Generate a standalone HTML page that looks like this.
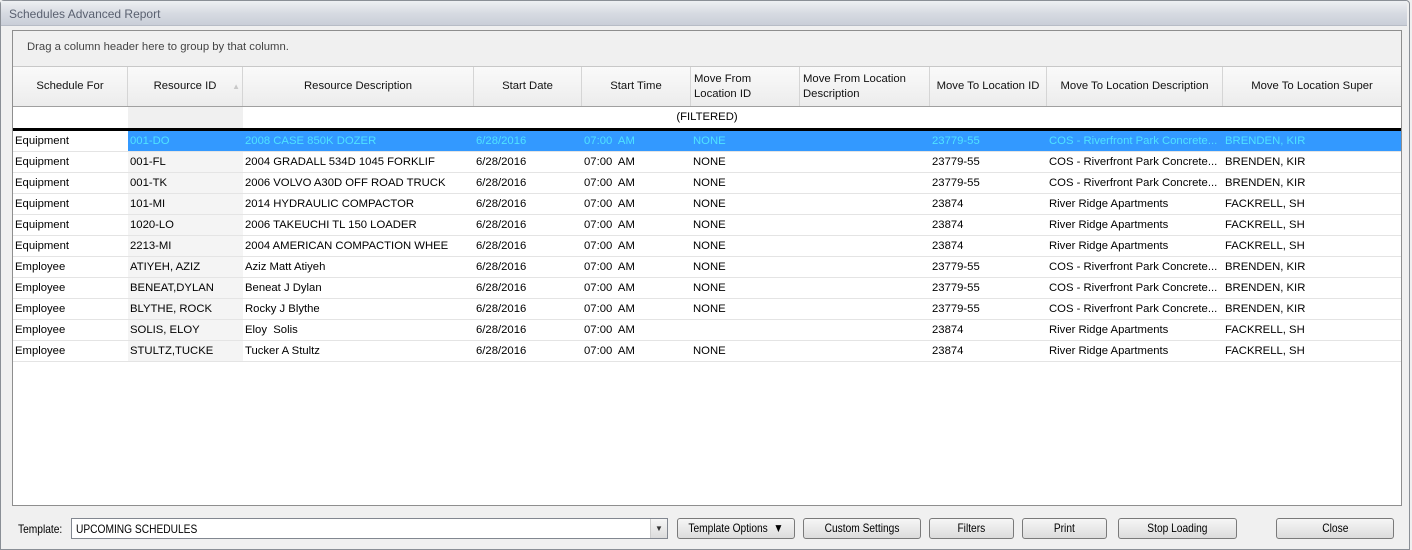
<!DOCTYPE html>
<html><head><meta charset="utf-8"><style>
*{box-sizing:border-box;margin:0;padding:0}
body{width:1412px;height:550px;background:#f0f0f0;font-family:"Liberation Sans",sans-serif;font-size:11.3px;color:#000;position:relative;overflow:hidden}
.abs{position:absolute}
#win{left:0;top:0;width:1410px;height:550px;border:1px solid #8a8f96;border-radius:4px 4px 0 0;background:#f0f0f0}
#title{left:1px;top:1px;width:1406px;height:25px;background:linear-gradient(#eef0f3,#d7dbe2 50%,#c9ced8);border-bottom:1px solid #b7bcc6;color:#5a6170;font-size:12px;padding:6px 0 0 8px}
#grid{left:12px;top:30px;width:1390px;height:476px;border:1px solid #8e8e8e;background:#fff}
#group{left:0;top:0;width:1388px;height:36px;background:#f0f0f0;color:#444;padding:10px 0 0 14px;border-bottom:1px solid #c8c8c8}
#hdr{left:0;top:36px;width:1388px;height:40px;background:linear-gradient(#fafafa,#ececec);border-bottom:1px solid #a0a0a0}
.h{position:absolute;top:0;height:39px;border-right:1px solid #d5d5d5;display:flex;align-items:center;justify-content:center;text-align:center;color:#111;line-height:15px}
.h.l{justify-content:flex-start;text-align:left;padding-left:3px}
#filt{left:0;top:76px;width:1388px;height:24px;border-bottom:3px solid #000}
.row{position:absolute;left:0;width:1388px;height:21px;border-bottom:1px solid #e4e4e4}
.c{position:absolute;top:0;height:20px;line-height:20px;padding-left:2px;white-space:nowrap;overflow:hidden}
.sel{background:#3399ff;color:#4fe3ff}
.btn{position:absolute;top:518px;height:21px;border:1px solid #7a7a7a;border-radius:3px;background:linear-gradient(#f6f6f6,#dcdcdc);text-align:center;line-height:19px;font-size:12px;}
.n{display:inline-block;transform:scaleX(.85);font-size:12px}
</style></head><body>
<div id="win" class="abs"></div>
<div id="title" class="abs">Schedules Advanced Report</div>
<div id="grid" class="abs">
 <div id="group" class="abs">Drag a column header here to group by that column.</div>
 <div id="hdr" class="abs">
  <div class="h" style="left:0;width:115px">Schedule For</div>
  <div class="h" style="left:115px;width:115px">Resource ID<span style="position:absolute;right:2px;color:#c8c8c8;font-size:8px">▲</span></div>
  <div class="h" style="left:230px;width:231px">Resource Description</div>
  <div class="h" style="left:461px;width:108px">Start Date</div>
  <div class="h" style="left:569px;width:109px">Start Time</div>
  <div class="h l" style="left:678px;width:109px">Move From<br>Location ID</div>
  <div class="h l" style="left:787px;width:130px">Move From Location<br>Description</div>
  <div class="h" style="left:917px;width:117px">Move To Location ID</div>
  <div class="h" style="left:1034px;width:176px">Move To Location Description</div>
  <div class="h" style="left:1210px;width:178px;border-right:none">Move To Location Super</div>
 </div>
 <div id="filt" class="abs">
  <div class="abs" style="left:115px;top:0;width:115px;height:21px;background:#f0f0f0"></div>
  <div class="abs" style="left:0;top:4px;width:1388px;text-align:center">(FILTERED)</div>
 </div>
 <div id="rows" class="abs" style="left:0;top:100px;width:1388px">
 </div>
</div>
<div class="abs" style="left:18px;top:522px"><span class="n" style="transform-origin:left">Template:</span></div>
<div class="abs" style="left:71px;top:518px;width:597px;height:21px;border:1px solid #828790;background:#fff;padding:3px 0 0 4px"><span class="n" style="transform-origin:left">UPCOMING SCHEDULES</span>
<div class="abs" style="right:0;top:0;width:17px;height:19px;border-left:1px solid #ccc;background:linear-gradient(#f6f6f6,#dcdcdc);font-size:8px;text-align:center;line-height:19px;color:#333">▼</div></div>
<div class="btn" style="left:677px;width:118px"><span class="n">Template Options &nbsp;▼</span></div>
<div class="btn" style="left:803px;width:118px"><span class="n">Custom Settings</span></div>
<div class="btn" style="left:929px;width:85px"><span class="n">Filters</span></div>
<div class="btn" style="left:1022px;width:85px"><span class="n">Print</span></div>
<div class="btn" style="left:1118px;width:119px"><span class="n">Stop Loading</span></div>
<div class="btn" style="left:1276px;width:118px"><span class="n">Close</span></div>
<script>
var d=[
["Equipment","001-DO","2008 CASE 850K DOZER","NONE","23779-55","COS - Riverfront Park Concrete...","BRENDEN, KIR"],
["Equipment","001-FL","2004 GRADALL 534D 1045 FORKLIF","NONE","23779-55","COS - Riverfront Park Concrete...","BRENDEN, KIR"],
["Equipment","001-TK","2006 VOLVO A30D OFF ROAD TRUCK","NONE","23779-55","COS - Riverfront Park Concrete...","BRENDEN, KIR"],
["Equipment","101-MI","2014 HYDRAULIC COMPACTOR","NONE","23874","River Ridge Apartments","FACKRELL, SH"],
["Equipment","1020-LO","2006 TAKEUCHI TL 150 LOADER","NONE","23874","River Ridge Apartments","FACKRELL, SH"],
["Equipment","2213-MI","2004 AMERICAN COMPACTION WHEE","NONE","23874","River Ridge Apartments","FACKRELL, SH"],
["Employee","ATIYEH, AZIZ","Aziz Matt Atiyeh","NONE","23779-55","COS - Riverfront Park Concrete...","BRENDEN, KIR"],
["Employee","BENEAT,DYLAN","Beneat J Dylan","NONE","23779-55","COS - Riverfront Park Concrete...","BRENDEN, KIR"],
["Employee","BLYTHE, ROCK","Rocky J Blythe","NONE","23779-55","COS - Riverfront Park Concrete...","BRENDEN, KIR"],
["Employee","SOLIS, ELOY","Eloy&nbsp; Solis","","23874","River Ridge Apartments","FACKRELL, SH"],
["Employee","STULTZ,TUCKE","Tucker A Stultz","NONE","23874","River Ridge Apartments","FACKRELL, SH"]];
var cols=[[0,115],[115,115],[230,231],[461,108],[569,109],[678,109],[787,130],[917,117],[1034,176],[1210,178]];
var h="";
d.forEach(function(r,i){
 var v=[r[0],r[1],r[2],"6/28/2016","07:00&nbsp; AM",r[3],"",r[4],r[5],r[6]];
 h+='<div class="row" style="top:'+(i*21)+'px">';
 v.forEach(function(t,j){
  var st='left:'+cols[j][0]+'px;width:'+cols[j][1]+'px;';
  var cls="c";
  if(i==0&&j>0)cls+=" sel";
  else if(j==1)st+='background:#f4f4f4;';
  h+='<div class="'+cls+'" style="'+st+'">'+t+'</div>';
 });
 h+='</div>';
});
document.getElementById("rows").innerHTML=h;
</script>
</body></html>
